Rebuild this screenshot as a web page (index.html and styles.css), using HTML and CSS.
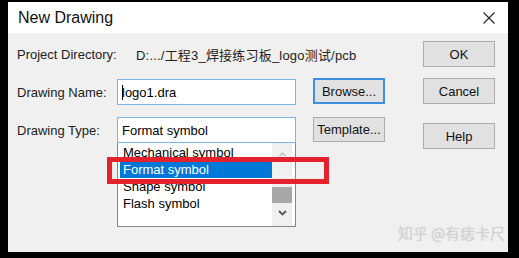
FILE: index.html
```html
<!DOCTYPE html>
<html lang="en">
<head>
  <meta charset="UTF-8" />
  <title>New Drawing</title>
  <link rel="stylesheet" href="styles.css">
</head>
<body>

<div class="dialog">
  <div class="titlebar">
    <div class="title">New Drawing</div>
    <svg class="close" width="12" height="12" viewBox="0 0 12 12">
      <path d="M0.5 0.5 L11.5 11.5 M11.5 0.5 L0.5 11.5" stroke="#222" stroke-width="1.1" fill="none"/>
    </svg>
  </div>

  <div class="content">
    <div class="label">Project Directory:</div>
    <div class="path">D:.../工程3_焊接练习板_logo测试/pcb</div>
    <button class="btn">OK</button>

    <div class="label">Drawing Name:</div>
    <div class="field"><span class="caret"></span>logo1.dra</div>
    <button class="btn btn-default">Browse...</button>
    <button class="btn">Cancel</button>

    <div class="label">Drawing Type:</div>
    <div class="field">Format symbol</div>
    <button class="btn">Template...</button>
    <button class="btn btn-help">Help</button>

    <!-- open combo list -->
    <div class="droplist">
      <div class="items">
        <div class="item">Mechanical symbol</div>
        <div class="item selected">Format symbol</div>
        <div class="item">Shape symbol</div>
        <div class="item">Flash symbol</div>
      </div>
      <div class="scrollbar">
        <svg class="arrow" width="7" height="5" viewBox="0 0 7 5">
          <path d="M0.5 4 L3.5 1 L6.5 4" stroke="#b5b5b5" stroke-width="1.2" fill="none"/>
        </svg>
        <div class="thumb"></div>
        <svg class="arrow" width="9" height="6" viewBox="0 0 9 6">
          <path d="M1 1 L4.5 4.5 L8 1" stroke="#555" stroke-width="1.8" fill="none"/>
        </svg>
      </div>
    </div>

    <div class="highlight-box"></div>

    <div class="watermark">知乎 @有痣卡尺</div>
  </div>
</div>

</body>
</html>
```

FILE: styles.css
```css
body {
  margin: 0;
  background: #000;
  font-family: 'Liberation Sans', Arial, 'Noto Sans CJK SC', sans-serif;
  font-size: 13px;
  color: #000;
}

.dialog {
  width: 500px;
  height: 250px;
  margin: 2px 0 0 8px;
  background: #f0f0f0;
}

.titlebar {
  height: 31px;
  background: #fff;
  display: flex;
  align-items: center;
  justify-content: space-between;
  padding: 0 13px 0 10px;
}

.title {
  font-size: 16px;
  color: #111;
}

.content {
  position: relative;
  height: 219px;
  box-sizing: border-box;
  padding: 8px 13px 0 9px;
  display: grid;
  grid-template-columns: 100px 196px 110px 72px;
  grid-template-rows: 26px 26px 26px;
  row-gap: 12px;
  align-content: start;
}

.label {
  grid-column: 1;
  align-self: center;
  color: #222;
}

.path {
  grid-column: 2 / span 2;
  align-self: center;
  padding-left: 19px;
  white-space: nowrap;
  letter-spacing: 0.2px;
  color: #222;
}

.field {
  grid-column: 2;
  width: 179px;
  height: 26px;
  box-sizing: border-box;
  border: 1px solid #7eb4ea;
  background: #fff;
  display: flex;
  align-items: center;
  padding-left: 4px;
}

.content > .field:nth-of-type(1) {
  margin-top: -1px;
}

.caret {
  display: inline-block;
  width: 1px;
  height: 15px;
  background: #000;
  margin-right: -1px;
}

.btn {
  width: 72px;
  height: 26px;
  padding: 0;
  border: 1px solid #adadad;
  background: #e1e1e1;
  font-family: inherit;
  font-size: 13px;
  color: #111;
}

.btn-default {
  grid-column: 3;
  margin-top: -1px;
  border: 2px solid #3d8ee0;
}

.content > .btn:nth-of-type(1),
.content > .btn:nth-of-type(3),
.btn-help {
  grid-column: 4;
}

.content > .btn:nth-of-type(3) {
  margin-top: -1px;
}

.content > .btn:nth-of-type(4) {
  grid-column: 3;
  height: 25px;
}

.btn-help {
  margin-top: 6px;
}

.droplist {
  position: absolute;
  left: 109px;
  top: 110px;
  width: 179px;
  height: 84px;
  box-sizing: border-box;
  border: 1px solid #828790;
  border-top: none;
  background: #fff;
  display: flex;
}

.items {
  flex: 1;
  padding: 1px 0 0 2px;
}

.item {
  height: 17px;
  line-height: 17px;
  padding-left: 3px;
  white-space: nowrap;
}

.item.selected {
  background: #0078d7;
  color: #fff;
}

.scrollbar {
  width: 20px;
  margin-right: 3px;
  background: #f0f0f0;
  display: flex;
  flex-direction: column;
  align-items: center;
}

.scrollbar .arrow {
  margin-top: 9px;
}

.thumb {
  width: 100%;
  height: 16px;
  margin-top: 30px;
  background: #a8a8a8;
}

.scrollbar .arrow:last-child {
  margin-top: 7px;
}

.highlight-box {
  position: absolute;
  left: 99px;
  top: 124px;
  width: 222px;
  height: 27px;
  box-sizing: border-box;
  border: 5px solid #e3222d;
}

.watermark {
  position: absolute;
  right: 3px;
  bottom: 9px;
  font-family: 'Noto Sans CJK SC', sans-serif;
  font-size: 15px;
  font-weight: 300;
  color: #d6d6d6;
  text-shadow: 0 0 1px #b0b0b0;
}
```
